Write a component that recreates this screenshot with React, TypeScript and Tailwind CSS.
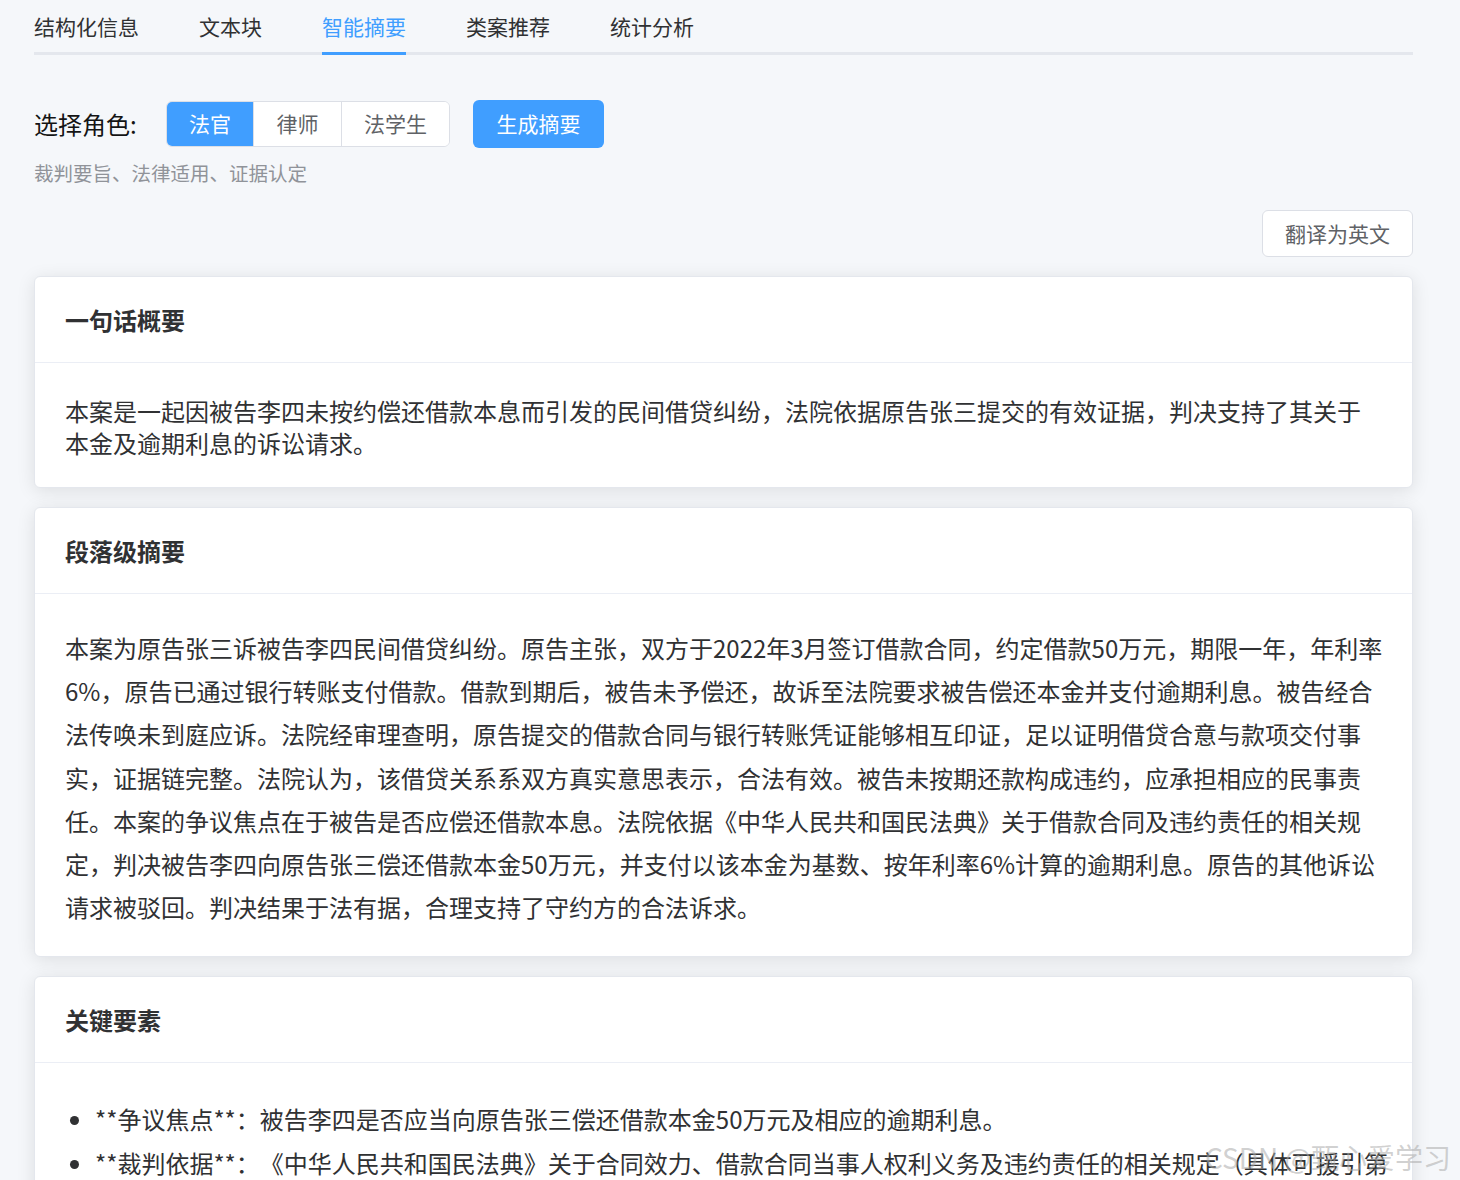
import React, { useState } from 'react';

const tabs = ['结构化信息', '文本块', '智能摘要', '类案推荐', '统计分析'];

const roles = [
  { name: '法官', width: 'w-[86px]', hint: '裁判要旨、法律适用、证据认定' },
  { name: '律师', width: 'w-[88px]', hint: '争议焦点、诉讼策略、风险提示' },
  { name: '法学生', width: 'w-[108px]', hint: '案情梳理、法理分析、学习要点' },
];

const paragraphLines = [
  '本案为原告张三诉被告李四民间借贷纠纷。原告主张，双方于2022年3月签订借款合同，约定借款50万元，期限一年，年利率',
  '6%，原告已通过银行转账支付借款。借款到期后，被告未予偿还，故诉至法院要求被告偿还本金并支付逾期利息。被告经合',
  '法传唤未到庭应诉。法院经审理查明，原告提交的借款合同与银行转账凭证能够相互印证，足以证明借贷合意与款项交付事',
  '实，证据链完整。法院认为，该借贷关系系双方真实意思表示，合法有效。被告未按期还款构成违约，应承担相应的民事责',
  '任。本案的争议焦点在于被告是否应偿还借款本息。法院依据《中华人民共和国民法典》关于借款合同及违约责任的相关规',
  '定，判决被告李四向原告张三偿还借款本金50万元，并支付以该本金为基数、按年利率6%计算的逾期利息。原告的其他诉讼',
  '请求被驳回。判决结果于法有据，合理支持了守约方的合法诉求。',
];

const keyPoints = [
  '**争议焦点**：被告李四是否应当向原告张三偿还借款本金50万元及相应的逾期利息。',
  '**裁判依据**：《中华人民共和国民法典》关于合同效力、借款合同当事人权利义务及违约责任的相关规定（具体可援引第',
  '**证据认定**：借款合同与银行转账凭证相互印证，证据链完整。',
];

const Card: React.FC<{ title: string; children: React.ReactNode }> = ({ title, children }) => (
  <div className="bg-white border border-[#e4e7ed] rounded-[6px] shadow-[0_3px_18px_rgba(0,0,0,0.1)] overflow-hidden">
    <div className="h-[86px] px-[30px] flex items-center border-b border-[#ebeef5]">
      <h3 className="text-[24px] font-bold text-[#303133]">{title}</h3>
    </div>
    <div className="px-[30px] pt-[32px] pb-[28px] text-[24px] text-[#303133]">{children}</div>
  </div>
);

const App: React.FC = () => {
  const [activeTab, setActiveTab] = useState('智能摘要');
  const [role, setRole] = useState('法官');
  const current = roles.find((r) => r.name === role)!;

  return (
    <div
      className="min-h-screen bg-[#f5f7fa] relative overflow-hidden [text-spacing-trim:space-all]"
      style={{ fontFamily: '"Noto Sans CJK SC", "Noto Sans", sans-serif' }}
    >
      <div className="ml-[34px] w-[1379px]">
        {/* tabs */}
        <div className="flex gap-[60px] border-b-[3px] border-[#e4e7ed]">
          {tabs.map((t) => (
            <button
              key={t}
              onClick={() => setActiveTab(t)}
              className={`h-[55px] -mb-[3px] border-b-[3px] text-[21px] leading-none ${
                t === activeTab ? 'border-[#409eff] text-[#409eff]' : 'border-transparent text-[#303133]'
              }`}
            >
              {t}
            </button>
          ))}
        </div>

        {/* role selector */}
        <div className="mt-[45px] flex items-center">
          <span className="w-[132px] text-[24px] text-[#141414]">选择角色:</span>
          <div className="flex h-[46px] border border-[#dcdfe6] rounded-[6px] overflow-hidden bg-white">
            {roles.map((r, i) => (
              <button
                key={r.name}
                onClick={() => setRole(r.name)}
                className={`${r.width} h-full text-[21px] ${i > 0 ? 'border-l border-[#dcdfe6]' : ''} ${
                  r.name === role ? 'bg-[#409eff] text-white' : 'bg-white text-[#606266]'
                }`}
              >
                {r.name}
              </button>
            ))}
          </div>
          <button className="ml-[23px] w-[131px] h-[48px] rounded-[6px] bg-[#409eff] text-white text-[21px]">
            生成摘要
          </button>
        </div>
        <p className="mt-[14px] text-[19.5px] text-[#909399] leading-[22px]">{current.hint}</p>

        <div className="mt-[26px] flex justify-end">
          <button className="w-[151px] h-[47px] rounded-[6px] border border-[#dcdfe6] bg-white text-[21px] text-[#606266]">
            翻译为英文
          </button>
        </div>

        {/* summaries */}
        <div className="mt-[19px] flex flex-col gap-[19px] pb-[40px]">
          <Card title="一句话概要">
            <p className="leading-[32px]">
              本案是一起因被告李四未按约偿还借款本息而引发的民间借贷纠纷，法院依据原告张三提交的有效证据，判决支持了其关于本金及逾期利息的诉讼请求。
            </p>
          </Card>

          <Card title="段落级摘要">
            <p className="leading-[43.2px]">
              {paragraphLines.map((line, i) => (
                <span key={i} className="block whitespace-nowrap">
                  {line}
                </span>
              ))}
            </p>
          </Card>

          <Card title="关键要素">
            <ul className="list-disc pl-[30px] pt-[2px] leading-[43.2px]">
              {keyPoints.map((k, i) => (
                <li key={i} className="whitespace-nowrap">
                  {k}
                </li>
              ))}
            </ul>
          </Card>
        </div>
      </div>

      {/* watermark */}
      <div className="absolute left-[1205px] top-[1136px] text-[28px] text-[rgba(170,170,170,0.55)] whitespace-nowrap pointer-events-none">
        CSDN @甄心爱学习
      </div>
    </div>
  );
};

export default App;
